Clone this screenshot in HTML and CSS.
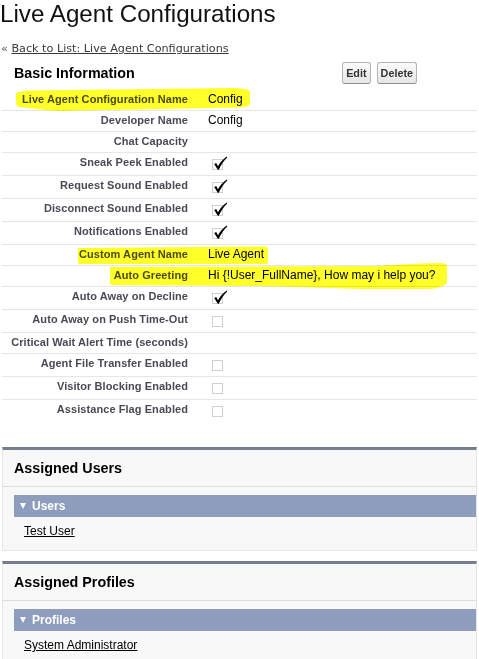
FILE: index.html
```html
<!DOCTYPE html>
<html>
<head>
<meta charset="utf-8">
<title>Live Agent Configurations</title>
<link rel="stylesheet" href="styles.css">
</head>
<body>
<div class="page">
  <h1 class="title">Live Agent Configurations</h1>
  <div class="crumb">« <a href="#">Back to List: Live Agent Configurations</a></div>

  <div class="detail">
    <div class="detail-head">
      <h2 class="block-title">Basic Information</h2>
      <div class="buttons">
        <button class="btn">Edit</button>
        <button class="btn">Delete</button>
      </div>
    </div>

    <div class="row"><div class="label">Live Agent Configuration Name</div><div class="value">Config</div></div>
    <div class="row"><div class="label">Developer Name</div><div class="value">Config</div></div>
    <div class="row"><div class="label">Chat Capacity</div><div class="value"></div></div>
    <div class="row"><div class="label">Sneak Peek Enabled</div><div class="value"><svg class="cb" viewBox="0 0 21 16" width="21" height="16"><rect x="4.5" y="4.5" width="10" height="10" class="cb-box"/><path class="cb-check" d="M6.2 9 L8.2 8 L10 11.2 C12 7.6 15 4.3 18.6 1.6 L19.3 2.4 C15.8 5.6 13 9.6 10.8 14.8 L9.8 14.8 Z"/></svg></div></div>
    <div class="row"><div class="label">Request Sound Enabled</div><div class="value"><svg class="cb" viewBox="0 0 21 16" width="21" height="16"><rect x="4.5" y="4.5" width="10" height="10" class="cb-box"/><path class="cb-check" d="M6.2 9 L8.2 8 L10 11.2 C12 7.6 15 4.3 18.6 1.6 L19.3 2.4 C15.8 5.6 13 9.6 10.8 14.8 L9.8 14.8 Z"/></svg></div></div>
    <div class="row"><div class="label">Disconnect Sound Enabled</div><div class="value"><svg class="cb" viewBox="0 0 21 16" width="21" height="16"><rect x="4.5" y="4.5" width="10" height="10" class="cb-box"/><path class="cb-check" d="M6.2 9 L8.2 8 L10 11.2 C12 7.6 15 4.3 18.6 1.6 L19.3 2.4 C15.8 5.6 13 9.6 10.8 14.8 L9.8 14.8 Z"/></svg></div></div>
    <div class="row"><div class="label">Notifications Enabled</div><div class="value"><svg class="cb" viewBox="0 0 21 16" width="21" height="16"><rect x="4.5" y="4.5" width="10" height="10" class="cb-box"/><path class="cb-check" d="M6.2 9 L8.2 8 L10 11.2 C12 7.6 15 4.3 18.6 1.6 L19.3 2.4 C15.8 5.6 13 9.6 10.8 14.8 L9.8 14.8 Z"/></svg></div></div>
    <div class="row"><div class="label">Custom Agent Name</div><div class="value">Live Agent</div></div>
    <div class="row"><div class="label">Auto Greeting</div><div class="value">Hi {!User_FullName}, How may i help you?</div></div>
    <div class="row"><div class="label">Auto Away on Decline</div><div class="value"><svg class="cb" viewBox="0 0 21 16" width="21" height="16"><rect x="4.5" y="4.5" width="10" height="10" class="cb-box"/><path class="cb-check" d="M6.2 9 L8.2 8 L10 11.2 C12 7.6 15 4.3 18.6 1.6 L19.3 2.4 C15.8 5.6 13 9.6 10.8 14.8 L9.8 14.8 Z"/></svg></div></div>
    <div class="row"><div class="label">Auto Away on Push Time-Out</div><div class="value"><svg class="cb" viewBox="0 0 21 16" width="21" height="16"><rect x="4.5" y="4.5" width="10" height="10" class="cb-box"/></svg></div></div>
    <div class="row"><div class="label">Critical Wait Alert Time (seconds)</div><div class="value"></div></div>
    <div class="row"><div class="label">Agent File Transfer Enabled</div><div class="value"><svg class="cb" viewBox="0 0 21 16" width="21" height="16"><rect x="4.5" y="4.5" width="10" height="10" class="cb-box"/></svg></div></div>
    <div class="row"><div class="label">Visitor Blocking Enabled</div><div class="value"><svg class="cb" viewBox="0 0 21 16" width="21" height="16"><rect x="4.5" y="4.5" width="10" height="10" class="cb-box"/></svg></div></div>
    <div class="row last"><div class="label">Assistance Flag Enabled</div><div class="value"><svg class="cb" viewBox="0 0 21 16" width="21" height="16"><rect x="4.5" y="4.5" width="10" height="10" class="cb-box"/></svg></div></div>
  </div>

  <div class="related">
    <h3 class="related-title">Assigned Users</h3>
    <div class="bar"><span class="tri"></span>Users</div>
    <div class="item"><a href="#">Test User</a></div>
  </div>

  <div class="related">
    <h3 class="related-title">Assigned Profiles</h3>
    <div class="bar"><span class="tri"></span>Profiles</div>
    <div class="item"><a href="#">System Administrator</a></div>
  </div>

  <svg class="marker" width="479" height="700" viewBox="0 0 479 700">
    <path d="M16 94 Q16 91 30 90.5 L230 88 Q249 88 250 92 L250 104 Q249 107 240 107.5 L80 110.5 Q60 111.5 45 110 L20 107 Q16 106 16 103 Z"/>
    <path d="M78 248 L266 246.5 Q268 246.5 268 249 L268 262 Q268 264 265 264 L80 264 Q78 264 78 262 Z"/>
    <path d="M110 267 L380 266 Q400 264 440 263 Q447 263 447 266 L447 282 Q446 287 430 289 L360 289 Q300 287 250 286 L112 285 Q110 285 110 283 Z"/>
  </svg>
</div>
</body>
</html>
```

FILE: styles.css
```css
html, body {
  margin: 0;
  padding: 0;
  background: #fff;
}

body {
  font-family: "Liberation Sans", Arial, sans-serif;
  color: #000;
  overflow: hidden;
}

.page {
  position: relative;
  width: 479px;
}

.title {
  margin: 0;
  font-size: 24.2px;
  font-weight: normal;
  line-height: 27px;
  color: #111;
}

.crumb {
  margin-top: 15px;
  padding-left: 1px;
  font-family: "DejaVu Sans", Verdana, sans-serif;
  font-size: 11.2px;
  line-height: 14px;
  color: #555;
}

.crumb a {
  color: #3a3a3a;
  text-decoration: underline;
}

.detail {
  margin: 0 2px;
}

.detail-head {
  display: flex;
  align-items: center;
  padding: 6px 60px 6px 12px;
}

.block-title {
  margin: 0;
  font-size: 14.3px;
  font-weight: bold;
  color: #000;
}

.buttons {
  margin-left: auto;
  display: flex;
  gap: 6px;
}

.btn {
  height: 22px;
  box-sizing: border-box;
  padding: 0 3px;
  font-family: "Liberation Sans", Arial, sans-serif;
  font-size: 10.8px;
  font-weight: bold;
  line-height: 20px;
  color: #333;
  background: linear-gradient(#fbfbfb, #e6e6e6);
  border: 1px solid #b5b5b5;
  border-bottom-color: #8f8f8f;
  border-radius: 3px;
}

.row {
  display: grid;
  grid-template-columns: 196px 1fr;
  border-bottom: 1px solid #e6e6e6;
}

.row.last {
  border-bottom: none;
}

.label {
  padding: 2px 10px 4px 0;
  text-align: right;
  font-size: 11px;
  font-weight: bold;
  letter-spacing: 0.07px;
  line-height: 14px;
  color: #4a4a56;
}

.value {
  padding: 2px 0 4px 10px;
  font-size: 12px;
  line-height: 14px;
  color: #000;
}

.cb {
  display: block;
}

.cb-box {
  fill: none;
  stroke: #a0a0a0;
  stroke-width: 1;
  stroke-dasharray: 1 1;
}

.cb-check {
  fill: #000;
}

.related {
  margin: 25px 2px 0;
  background: #f8f8f8;
  border: 1px solid #e6e6e6;
  border-top: 3px solid #747e90;
}

.related + .related {
  margin-top: 10px;
}

.related-title {
  margin: 0;
  padding: 11px 11px;
  font-size: 14.3px;
  font-weight: bold;
  line-height: 14px;
  color: #000;
  border-bottom: 1px solid #dcdcdc;
}

.bar {
  margin: 8px 0 0 11px;
  height: 22px;
  display: flex;
  align-items: center;
  padding-left: 6px;
  background: #8e9dbe;
  color: #fff;
  font-size: 12px;
  font-weight: bold;
  line-height: 22px;
}

.tri {
  width: 0;
  height: 0;
  border-left: 3.5px solid transparent;
  border-right: 3.5px solid transparent;
  border-top: 6px solid #fff;
  margin-right: 6px;
}

.item {
  padding: 7px 0 12px 21px;
  font-size: 12px;
  line-height: 14px;
}

.item a {
  color: #000;
  text-decoration: underline;
}

.marker {
  position: absolute;
  left: 0;
  top: 0;
  pointer-events: none;
  mix-blend-mode: multiply;
}

.marker path {
  fill: #ffff2a;
}
```
